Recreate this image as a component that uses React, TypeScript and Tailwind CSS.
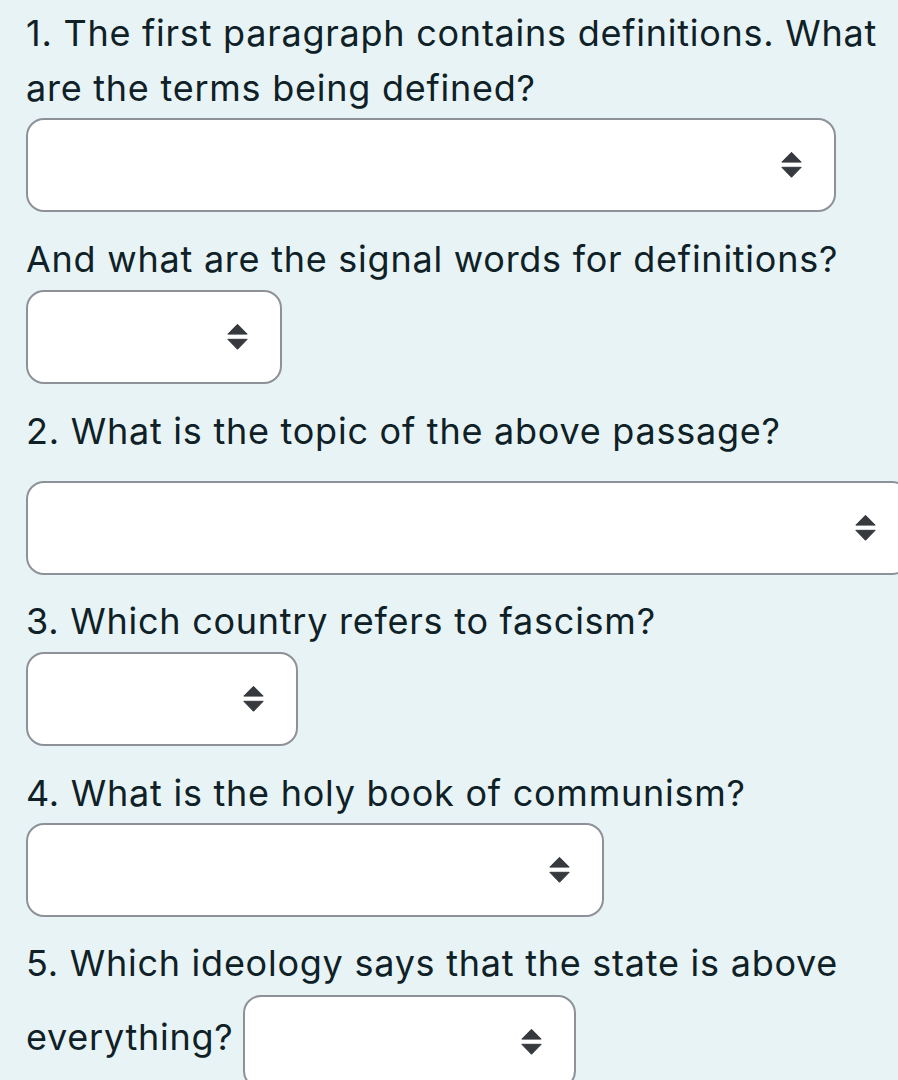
import React from 'react';

function Arrows() {
  return (
    <svg width="21" height="27" viewBox="0 0 21 27" className="pointer-events-none absolute right-[34px] top-1/2 -translate-y-1/2" aria-hidden>
      <path d="M10.5 0.8 L20.2 10.6 L0.8 10.6 Z" fill="#36393e" stroke="#36393e" strokeWidth="1" strokeLinejoin="round" />
      <path d="M0.8 15.8 L20.2 15.8 L10.5 25.8 Z" fill="#36393e" stroke="#36393e" strokeWidth="1" strokeLinejoin="round" />
    </svg>
  );
}

function Choice({ className }: { className: string }) {
  return (
    <div className={`relative h-[94px] shrink-0 ${className}`}>
      <select
        defaultValue=""
        className="h-full w-full appearance-none rounded-[18px] border-2 border-[#8e9298] bg-white outline-none"
      >
        <option value=""></option>
      </select>
      <Arrows />
    </div>
  );
}

export default function App() {
  return (
    <div
      className="h-[1080px] w-full overflow-hidden bg-[#e7f3f5] px-[26px] pt-[6px] text-[36px] leading-[55px] tracking-[0.75px] text-[#0f2126]"
      style={{ fontFamily: 'Inter, "Noto Sans", sans-serif' }}
    >
      <p className="whitespace-nowrap">
        1. The first paragraph contains definitions. What
        <br />
        are the terms being defined?
      </p>
      <Choice className="mt-[2px] w-[810px]" />

      <p className="mt-[20px] whitespace-nowrap">And what are the signal words for definitions?</p>
      <Choice className="mt-[3px] w-[256px]" />

      <p className="mt-[20px] whitespace-nowrap">2. What is the topic of the above passage?</p>
      <Choice className="mt-[22px] w-[884px]" />

      <p className="mt-[19px] whitespace-nowrap">3. Which country refers to fascism?</p>
      <Choice className="mt-[3px] w-[272px]" />

      <p className="mt-[20px] whitespace-nowrap">4. What is the holy book of communism?</p>
      <Choice className="mt-[2px] w-[578px]" />

      <p className="mt-[19px] whitespace-nowrap">5. Which ideology says that the state is above</p>
      <div className="mt-[4px] flex items-start gap-[10px]">
        <span className="mt-[15px] whitespace-nowrap">everything?</span>
        <Choice className="w-[333px]" />
      </div>
    </div>
  );
}
